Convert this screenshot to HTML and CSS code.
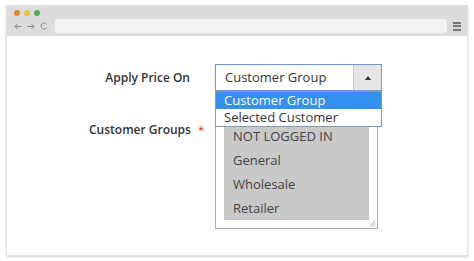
FILE: index.html
```html
<!DOCTYPE html>
<html lang="en">
<head>
  <meta charset="UTF-8">
  <title>Apply Price On</title>
  <link rel="stylesheet" href="styles.css">
</head>
<body>
  <div class="browser">
    <!-- Browser chrome -->
    <header class="chrome">
      <div class="dots">
        <span class="dot red"></span><span class="dot yellow"></span><span class="dot green"></span>
      </div>
      <div class="nav">
        <div class="nav-icons">
          <svg width="8" height="7" viewBox="0 0 8 7"><path d="M7.5 3.5H1M3.5 1L1 3.5 3.5 6" fill="none" stroke="#888" stroke-width="1"/></svg>
          <svg width="8" height="7" viewBox="0 0 8 7"><path d="M0.5 3.5H7M4.5 1L7 3.5 4.5 6" fill="none" stroke="#888" stroke-width="1"/></svg>
          <svg width="8" height="8" viewBox="0 0 8 8"><path d="M6.6 2.3A3 3 0 1 0 6.8 5.4" fill="none" stroke="#888" stroke-width="1"/></svg>
        </div>
        <div class="address"></div>
        <div class="menu"><span></span><span></span><span></span></div>
      </div>
    </header>

    <!-- Form -->
    <main class="content">
      <div class="row">
        <div class="label">Apply Price On</div>
        <div class="field">
          <div class="select">
            <span class="value">Customer Group</span>
            <span class="arrow"><svg width="6" height="4" viewBox="0 0 6 4"><path d="M0 4L3 0 6 4z" fill="#333"/></svg></span>
            <ul class="dropdown">
              <li class="active">Customer Group</li>
              <li>Selected Customer</li>
            </ul>
          </div>
        </div>
      </div>
      <div class="row">
        <div class="label">Customer Groups<span class="req">*</span></div>
        <div class="field">
          <div class="listbox">
            <ul class="options">
              <li>NOT LOGGED IN</li>
              <li>General</li>
              <li>Wholesale</li>
              <li>Retailer</li>
            </ul>
            <svg class="grip" width="7" height="7" viewBox="0 0 7 7"><path d="M6.5 0.5L0.5 6.5M6.5 3L3 6.5M6.5 5.5L5.5 6.5" stroke="#999" stroke-width="0.8"/></svg>
          </div>
        </div>
      </div>
    </main>
  </div>
</body>
</html>
```

FILE: styles.css
```css
/* --- Reset --- */
* { box-sizing: border-box; margin: 0; padding: 0; }
body { background: #fff; font-family: 'Open Sans', sans-serif; color: #333; }
ul { list-style: none; }

/* --- Browser frame --- */
.browser {
  margin: 5px 6px;
  height: 251px;
  border: 1px solid #e2e2e2;
  box-shadow: 0 1px 2px rgba(0,0,0,0.18);
  background: #fff;
}
.chrome { background: #dcdcdc; height: 30px; padding: 2px 0 0 7px; }
.dots { display: flex; gap: 4px; height: 9px; align-items: center; }
.dot { width: 6px; height: 6px; border-radius: 50%; }
.red { background: #e8842c; }
.yellow { background: #e8c23a; }
.green { background: #4caf50; }
.nav { display: flex; align-items: center; height: 16px; margin-top: 1px; }
.nav-icons { display: flex; gap: 5px; width: 41px; align-items: center; }
.address { width: 392px; height: 14px; background: #f2f2f2; border-radius: 2px; }
.menu { display: flex; flex-direction: column; gap: 1.5px; margin-left: 6px; }
.menu span { width: 8px; height: 2px; background: #777; }

/* --- Form --- */
.content { padding-top: 28px; }
.row { display: flex; margin-bottom: 25px; }
.label {
  width: 208px;
  padding-right: 25px;
  text-align: right;
  font-size: 12px;
  font-weight: 600;
  color: #333;
  line-height: 27px;
}
.req { color: #e02b27; font-weight: 400; font-size: 11px; margin-left: 7px; margin-right: -14px; }
.field { width: 167px; }

.select {
  position: relative;
  display: flex;
  height: 27px;
  border: 1px solid #6d98c7;
  font-size: 13px;
}
.select .value { flex: 1; padding-left: 9px; line-height: 25px; }
.select .arrow {
  width: 28px;
  background: #e6e6e6;
  border-left: 1px solid #b7c7d8;
  display: flex;
  align-items: center;
  justify-content: center;
}
.dropdown {
  position: absolute;
  top: 26px;
  left: -1px;
  right: -1px;
  background: #fff;
  border: 1px solid #7f9db9;
  z-index: 2;
  line-height: 17px;
}
.dropdown li { padding-left: 8px; height: 17px; }
.dropdown li.active { background: #3390ec; color: #fff; }

.listbox {
  position: relative;
  width: 163px;
  height: 113px;
  border: 1px solid #adadad;
  padding: 7px 8px 9px 8px;
}
.options { background: #c9c9c9; font-size: 13px; color: #444; }
.options li { height: 24px; line-height: 24px; padding-left: 9px; }
.grip { position: absolute; right: 1px; bottom: 1px; }
```
